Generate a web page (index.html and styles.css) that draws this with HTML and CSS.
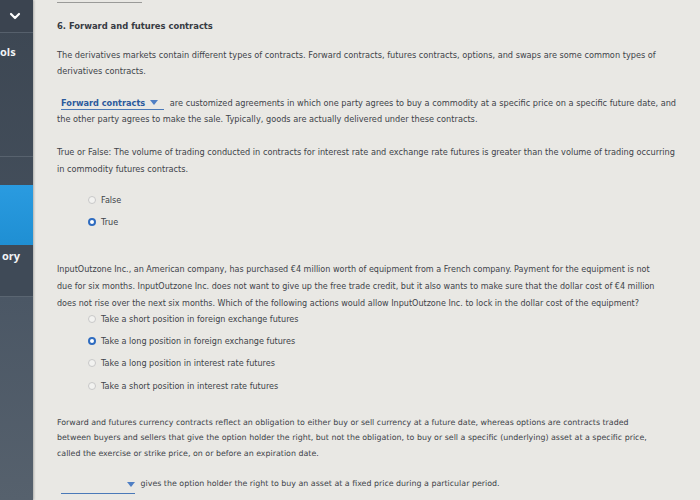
FILE: index.html
```html
<!DOCTYPE html>
<html>
<head>
<meta charset="utf-8">
<link rel="stylesheet" href="styles.css">
</head>
<body>
<div class="page">
  <aside class="sidebar">
    <div class="sb-top">
      <svg class="chev" width="12" height="8" viewBox="0 0 12 8"><path d="M2 2 L6 6 L10 2" fill="none" stroke="#fff" stroke-width="2.2" stroke-linecap="round" stroke-linejoin="round"/></svg>
    </div>
    <div class="sb-tools"><span class="clip">ols</span></div>
    <div class="sb-gap"></div>
    <div class="sb-active"></div>
    <div class="sb-history"><span class="clip">ory</span></div>
    <div class="sb-rest"></div>
  </aside>
  <main class="content">
    <div class="tabline"></div>
    <h1 class="title">6. Forward and futures contracts</h1>
    <p class="para p1">The derivatives markets contain different types of contracts. Forward contracts, futures contracts, options, and swaps are some common types of<br>derivatives contracts.</p>
    <p class="para p2"><span class="dd filled">Forward contracts<span class="tri"></span></span> are customized agreements in which one party agrees to buy a commodity at a specific price on a specific future date, and<br>the other party agrees to make the sale. Typically, goods are actually delivered under these contracts.</p>
    <p class="para p3">True or False: The volume of trading conducted in contracts for interest rate and exchange rate futures is greater than the volume of trading occurring<br>in commodity futures contracts.</p>
    <ul class="opts opts1">
      <li><span class="radio"></span>False</li>
      <li><span class="radio on"></span>True</li>
    </ul>
    <p class="para p4">InputOutzone Inc., an American company, has purchased €4 million worth of equipment from a French company. Payment for the equipment is not<br>due for six months. InputOutzone Inc. does not want to give up the free trade credit, but it also wants to make sure that the dollar cost of €4 million<br>does not rise over the next six months. Which of the following actions would allow InputOutzone Inc. to lock in the dollar cost of the equipment?</p>
    <ul class="opts opts2">
      <li><span class="radio"></span>Take a short position in foreign exchange futures</li>
      <li><span class="radio on"></span>Take a long position in foreign exchange futures</li>
      <li><span class="radio"></span>Take a long position in interest rate futures</li>
      <li><span class="radio"></span>Take a short position in interest rate futures</li>
    </ul>
    <p class="para p5">Forward and futures currency contracts reflect an obligation to either buy or sell currency at a future date, whereas options are contracts traded<br>between buyers and sellers that give the option holder the right, but not the obligation, to buy or sell a specific (underlying) asset at a specific price,<br>called the exercise or strike price, on or before an expiration date.</p>
    <p class="para p6"><span class="dd empty"><span class="tri"></span></span> gives the option holder the right to buy an asset at a fixed price during a particular period.</p>
  </main>
</div>
</body>
</html>
```

FILE: styles.css
```css
html, body {
  margin: 0;
  padding: 0;
  background: #e9e8e4;
}
.page {
  display: flex;
  width: 700px;
  height: 500px;
  overflow: hidden;
  font-family: "DejaVu Sans", Verdana, sans-serif;
  color: #404349;
}
.sidebar {
  width: 33px;
  flex: none;
  display: flex;
  flex-direction: column;
  background: linear-gradient(#3c4652, #4d5967);
  box-shadow: 1px 0 2px rgba(0,0,0,0.25);
}
.sb-top {
  height: 33px;
  border-bottom: 1px solid #56606c;
  background: #3b4450;
  display: flex;
  align-items: center;
  justify-content: flex-end;
  padding-right: 12px;
  box-sizing: border-box;
}
.chev { display: block; }
.sb-tools {
  height: 124px;
  border-bottom: 1px solid #58626e;
  overflow: hidden;
  display: flex;
  justify-content: flex-start;
  padding-top: 11px;
  box-sizing: border-box;
}
.clip {
  color: #f2f4f6;
  font-family: "Open Sans", "DejaVu Sans", sans-serif;
  font-weight: 700;
  font-size: 11px;
  white-space: nowrap;
}
.sb-gap {
  height: 28px;
}
.sb-active {
  height: 60px;
  background: linear-gradient(#2a9be0, #1f8fd3);
}
.sb-history {
  height: 52px;
  border-bottom: 1px solid #5a6571;
  overflow: hidden;
  display: flex;
  justify-content: flex-start;
  padding-top: 3px;
  padding-left: 2px;
  box-sizing: border-box;
  background: #3f4a57;
}
.sb-rest {
  flex: 1;
  background: linear-gradient(#4b5765, #56616d);
}
.content {
  flex: 1;
  padding-left: 24px;
  padding-right: 10px;
  min-width: 0;
}
.tabline {
  width: 85px;
  height: 1px;
  background: #9a9a98;
  margin-top: 2px;
}
.title {
  font-size: 8.4px;
  font-weight: 700;
  margin: 17px 0 0 0;
  line-height: 12px;
  color: #363a42;
}
.para {
  font-size: 8.2px;
  line-height: 16px;
  margin: 0;
  white-space: nowrap;
}
.p1 { margin-top: 15px; }
.p2 { margin-top: 16px; }
.p3 { margin-top: 17px; line-height: 17px; }
.p4 { margin-top: 27px; line-height: 17px; font-size: 8.05px; }
.p5 { margin-top: 18px; line-height: 15.5px; font-size: 7.9px; }
.p6 { margin-top: 15px; font-size: 7.9px; }
.dd {
  display: inline-block;
  border-bottom: 1px solid #4a79b8;
  line-height: 12px;
  margin-left: 4px;
  margin-right: 3px;
}
.dd.filled {
  color: #2c5a9c;
  font-weight: 700;
  padding-right: 6px;
}
.dd.empty {
  width: 74px;
  height: 12px;
  text-align: right;
  vertical-align: -3px;
}
.tri {
  display: inline-block;
  width: 0;
  height: 0;
  border-left: 4px solid transparent;
  border-right: 4px solid transparent;
  border-top: 5px solid #4f7fc4;
  margin-left: 5px;
  vertical-align: 1px;
}
.dd.empty .tri {
  vertical-align: 2px;
}
.opts {
  list-style: none;
  margin: 0;
  padding: 0 0 0 31px;
  font-size: 8.1px;
}
.opts li {
  display: flex;
  align-items: center;
  height: 22.3px;
}
.opts1 { margin-top: 11px; }
.opts2 { margin-top: -4px; }
.radio {
  width: 8px;
  height: 8px;
  border-radius: 50%;
  border: 1px solid #c8c8c8;
  background: #f2f2f0;
  margin-right: 5px;
  box-sizing: border-box;
  flex: none;
}
.radio.on {
  border: 2.5px solid #2f6cc0;
  background: #fff;
}
```
